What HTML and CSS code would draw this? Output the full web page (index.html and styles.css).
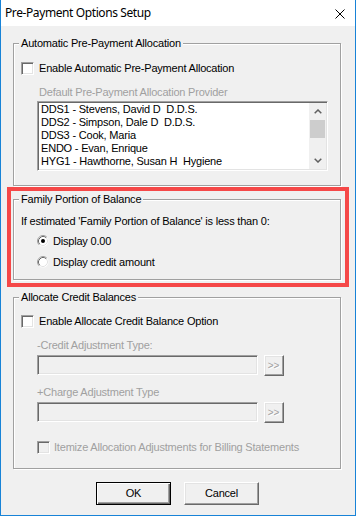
FILE: index.html
```html
<!DOCTYPE html>
<html>
<head>
<meta charset="utf-8">
<link rel="stylesheet" href="styles.css">
</head>
<body>
<div class="window">
  <div class="titlebar">
    <span class="title">Pre-Payment Options Setup</span>
    <svg class="close" width="10" height="10" viewBox="0 0 10 10"><path d="M0.5 0.5L9.5 9.5M9.5 0.5L0.5 9.5" stroke="#000" stroke-width="1" fill="none"/></svg>
  </div>
  <div class="content">
    <div class="group g1">
      <div class="legend">Automatic Pre-Payment Allocation</div>
      <div class="row r-check1"><span class="check"></span><span class="lbl">Enable Automatic Pre-Payment Allocation</span></div>
      <div class="row disabled r-provider">Default Pre-Payment Allocation Provider</div>
      <div class="listbox">
        <div class="items">
          <div class="item">DDS1 - Stevens, David D&nbsp; D.D.S.</div>
          <div class="item">DDS2 - Simpson, Dale D&nbsp; D.D.S.</div>
          <div class="item">DDS3 - Cook, Maria</div>
          <div class="item">ENDO - Evan, Enrique</div>
          <div class="item">HYG1 - Hawthorne, Susan H&nbsp; Hygiene</div>
        </div>
        <div class="vscroll">
          <div class="sbtn"><svg width="8" height="5" viewBox="0 0 8 5"><path d="M0.7 4.3L4 1L7.3 4.3" stroke="#606060" stroke-width="1.5" fill="none"/></svg></div>
          <div class="track"><div class="thumb"></div></div>
          <div class="sbtn"><svg width="8" height="5" viewBox="0 0 8 5"><path d="M0.7 0.7L4 4L7.3 0.7" stroke="#606060" stroke-width="1.5" fill="none"/></svg></div>
        </div>
      </div>
    </div>

    <div class="highlight">
      <div class="group g2">
        <div class="legend">Family Portion of Balance</div>
        <div class="row r-info">If estimated 'Family Portion of Balance' is less than 0:</div>
        <div class="row r-radio1">
          <svg class="radio" width="12" height="12" viewBox="0 0 12 12">
            <circle cx="6" cy="6" r="5.5" fill="#fff"/>
            <path d="M2.11 9.89A5.5 5.5 0 0 1 9.89 2.11" stroke="#a0a0a0" fill="none"/>
            <path d="M2.82 9.18A4.5 4.5 0 0 1 9.18 2.82" stroke="#696969" fill="none"/>
            <path d="M2.82 9.18A4.5 4.5 0 0 0 9.18 2.82" stroke="#e3e3e3" fill="none"/>
            <circle cx="6" cy="6" r="2" fill="#000"/>
          </svg>
          <span class="lbl">Display 0.00</span>
        </div>
        <div class="row r-radio2">
          <svg class="radio" width="12" height="12" viewBox="0 0 12 12">
            <circle cx="6" cy="6" r="5.5" fill="#fff"/>
            <path d="M2.11 9.89A5.5 5.5 0 0 1 9.89 2.11" stroke="#a0a0a0" fill="none"/>
            <path d="M2.82 9.18A4.5 4.5 0 0 1 9.18 2.82" stroke="#696969" fill="none"/>
            <path d="M2.82 9.18A4.5 4.5 0 0 0 9.18 2.82" stroke="#e3e3e3" fill="none"/>
          </svg>
          <span class="lbl">Display credit amount</span>
        </div>
      </div>
    </div>

    <div class="group g3">
      <div class="legend">Allocate Credit Balances</div>
      <div class="row r-check2"><span class="check"></span><span class="lbl">Enable Allocate Credit Balance Option</span></div>
      <div class="row disabled r-sub1">-Credit Adjustment Type:</div>
      <div class="field-row r-field1">
        <div class="field"></div>
        <div class="pick">&gt;&gt;</div>
      </div>
      <div class="row disabled r-sub2">+Charge Adjustment Type</div>
      <div class="field-row r-field2">
        <div class="field"></div>
        <div class="pick">&gt;&gt;</div>
      </div>
      <div class="row disabled r-itemize"><span class="check check-off"></span><span class="lbl">Itemize Allocation Adjustments for Billing Statements</span></div>
    </div>

    <div class="buttons">
      <div class="btn btn-default">OK</div>
      <div class="btn">Cancel</div>
    </div>
  </div>
</div>
</body>
</html>
```

FILE: styles.css
```css
body {
  margin: 0;
  font-family: "Liberation Sans", Arial, sans-serif;
  font-size: 11px;
  letter-spacing: -0.2px;
  color: #000;
}

.window {
  width: 356px;
  height: 516px;
  box-sizing: border-box;
  border: 1px solid #1883d7;
  border-top: 0;
  background: #f0f0f0;
  display: flex;
  flex-direction: column;
}

.titlebar {
  height: 26px;
  flex: none;
  background: #fff;
  display: flex;
  justify-content: space-between;
  align-items: flex-start;
  padding: 0 10px 0 4px;
}

.title {
  font-family: "Noto Sans", "Open Sans", sans-serif;
  font-size: 12px;
  letter-spacing: -0.4px;
  line-height: 26px;
}

.close {
  margin-top: 9px;
}

.content {
  padding: 0 14px 0 12px;
  display: flex;
  flex-direction: column;
}

.group {
  border: 1px solid #a0a0a0;
  box-shadow: 1px 1px 0 #fff, inset 1px 1px 0 #fff;
  padding: 0 7px;
  display: flex;
  flex-direction: column;
  align-items: flex-start;
}

.legend {
  margin: -8px 0 0 -2px;
  padding: 0 2px;
  line-height: 14px;
  background: #f0f0f0;
}

.row {
  height: 14px;
  line-height: 14px;
  display: flex;
  align-items: center;
  white-space: nowrap;
}

.disabled {
  color: #a0a0a0;
}

.check {
  width: 13px;
  height: 13px;
  flex: none;
  box-sizing: border-box;
  border: 1px solid;
  border-color: #a0a0a0 #fff #fff #a0a0a0;
  box-shadow: inset 1px 1px 0 #696969, inset -1px -1px 0 #e3e3e3;
  background: #fff;
  margin-right: 5px;
}

.check-off {
  background: #f0f0f0;
  margin-right: 4px;
}

.radio {
  flex: none;
  margin-right: 4px;
}

/* group 1 */
.g1 {
  margin-top: 17px;
  padding-bottom: 14px;
}

.r-check1 { margin-top: 11px; }

.r-provider {
  margin-top: 10px;
  margin-left: 18px;
}

.listbox {
  margin-top: 2px;
  margin-left: 16px;
  width: 291px;
  height: 70px;
  box-sizing: border-box;
  border: 1px solid;
  border-color: #a0a0a0 #fff #fff #a0a0a0;
  box-shadow: inset 1px 1px 0 #696969, inset -1px -1px 0 #e3e3e3;
  padding: 1px;
  background: #fff;
  display: flex;
}

.items {
  flex: 1;
  padding-left: 2px;
  overflow: hidden;
}

.item {
  height: 13px;
  line-height: 13px;
  white-space: nowrap;
}

.vscroll {
  width: 17px;
  flex: none;
  background: #f0f0f0;
  display: flex;
  flex-direction: column;
}

.sbtn {
  height: 17px;
  flex: none;
  display: flex;
  align-items: center;
  justify-content: center;
}

.track {
  flex: 1;
  padding: 0 1px;
}

.thumb {
  height: 18px;
  background: #cdcdcd;
}

/* highlight */
.highlight {
  margin: 1px -8px 0 -6px;
  border: 4px solid #f54848;
  padding: 8px 4px 3px 2px;
  display: flex;
  flex-direction: column;
}

.g2 {
  padding-bottom: 10px;
}

.r-info { margin-top: 8px; }

.r-radio1 {
  margin-top: 6px;
  margin-left: 16px;
}

.r-radio2 {
  margin-top: 7px;
  margin-left: 16px;
}

/* group 3 */
.g3 {
  margin-top: 10px;
  padding-bottom: 14px;
}

.r-check2 { margin-top: 10px; }

.r-sub1 {
  margin-top: 10px;
  margin-left: 16px;
}

.r-sub2 {
  margin-top: 9px;
  margin-left: 16px;
}

.field-row {
  margin-left: 16px;
  margin-top: 3px;
  height: 21px;
  display: flex;
  align-items: flex-start;
  gap: 6px;
}

.field {
  width: 221px;
  height: 20px;
  box-sizing: border-box;
  border: 1px solid;
  border-color: #a0a0a0 #fff #fff #a0a0a0;
  box-shadow: inset 1px 1px 0 #696969, inset -1px -1px 0 #e3e3e3;
  background: #f0f0f0;
}

.pick {
  width: 20px;
  height: 21px;
  box-sizing: border-box;
  border: 1px solid;
  border-color: #fff #696969 #696969 #fff;
  box-shadow: inset -1px -1px 0 #a0a0a0, inset 1px 1px 0 #e3e3e3;
  background: #f0f0f0;
  color: #a0a0a0;
  text-shadow: 1px 1px 0 #fff;
  font-size: 10px;
  letter-spacing: 0;
  display: flex;
  align-items: center;
  justify-content: center;
  padding-right: 1px;
}

.r-itemize {
  margin-top: 17px;
  margin-left: 16px;
}

/* buttons */
.buttons {
  margin-top: 13px;
  display: flex;
  justify-content: center;
  gap: 13px;
  padding-left: 1px;
}

.btn {
  width: 75px;
  height: 23px;
  box-sizing: border-box;
  border: 1px solid;
  border-color: #fff #696969 #696969 #fff;
  box-shadow: inset -1px -1px 0 #a0a0a0, inset 1px 1px 0 #e3e3e3;
  background: #f0f0f0;
  display: flex;
  align-items: center;
  justify-content: center;
  padding-bottom: 2px;
}

.btn-default {
  border-color: #000;
  box-shadow: inset 1px 1px 0 #fff, inset -1px -1px 0 #696969, inset -2px -2px 0 #a0a0a0;
}
```
